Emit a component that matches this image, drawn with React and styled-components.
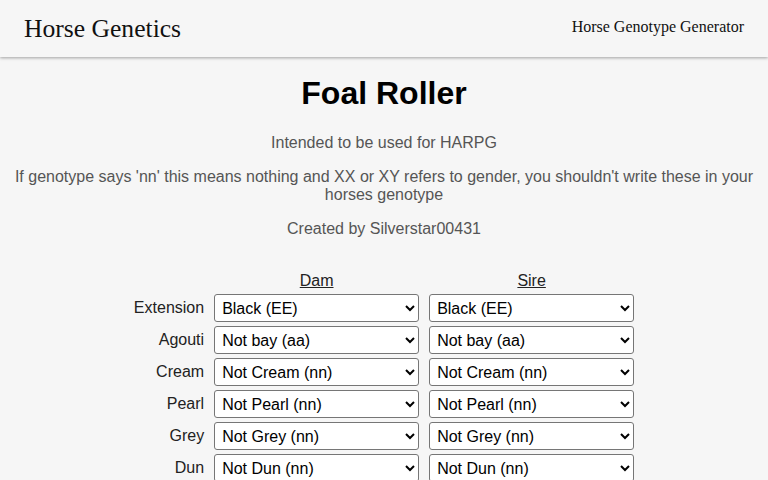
import React from 'react';
import styled, { createGlobalStyle } from 'styled-components';

const GlobalStyle = createGlobalStyle`
  html, body {
    margin: 0;
    padding: 0;
    background: #f6f6f6;
  }
  body {
    font-family: "Liberation Sans", Arial, sans-serif;
  }
`;

const Header = styled.header`
  height: 57px;
  display: flex;
  align-items: center;
  justify-content: space-between;
  padding: 0 24px;
  background: #f6f6f6;
  box-shadow: 0 1px 3px rgba(0, 0, 0, 0.35);
  font-family: "Liberation Serif", "Times New Roman", serif;
  color: #111;
  position: relative;
`;

const Brand = styled.div`
  font-size: 25.6px;
`;

const NavLink = styled.a`
  font-size: 16px;
  color: #111;
  text-decoration: none;
  margin-top: -3px;
`;

const Main = styled.main`
  padding-top: 18px;
  text-align: center;
`;

const Title = styled.h1`
  font-size: 32px;
  font-weight: bold;
  color: #000;
  margin: 0 0 22px;
`;

const Note = styled.p`
  font-size: 16px;
  color: #555;
  margin: 0 0 16px;
  padding: 0 14px;
`;

const Roller = styled.div`
  display: grid;
  grid-template-columns: auto 205px 205px;
  column-gap: 10px;
  row-gap: 4px;
  justify-content: center;
  align-items: center;
  margin-top: 34px;
`;

const ColHead = styled.div`
  font-size: 16px;
  color: #222;
  text-decoration: underline;
  text-align: center;
  line-height: 18px;
`;

const Label = styled.label`
  font-size: 16px;
  color: #222;
  text-align: right;
`;

const Select = styled.select`
  width: 205px;
  height: 28px;
  font-family: "Liberation Sans", Arial, sans-serif;
  font-size: 16px;
  color: #000;
  background: #fff;
  border: 1px solid #767676;
  border-radius: 3px;
  padding: 0 3px;
`;

const genes = [
  { name: 'Extension', value: 'Black (EE)' },
  { name: 'Agouti', value: 'Not bay (aa)' },
  { name: 'Cream', value: 'Not Cream (nn)' },
  { name: 'Pearl', value: 'Not Pearl (nn)' },
  { name: 'Grey', value: 'Not Grey (nn)' },
  { name: 'Dun', value: 'Not Dun (nn)' },
];

export default function App() {
  return (
    <>
      <GlobalStyle />
      <Header>
        <Brand>Horse Genetics</Brand>
        <NavLink href="#">Horse Genotype Generator</NavLink>
      </Header>
      <Main>
        <Title>Foal Roller</Title>
        <Note>Intended to be used for HARPG</Note>
        <Note>
          If genotype says 'nn' this means nothing and XX or XY refers to gender, you shouldn't write these in your horses genotype
        </Note>
        <Note>Created by Silverstar00431</Note>
        <Roller>
          <span />
          <ColHead>Dam</ColHead>
          <ColHead>Sire</ColHead>
          {genes.map(gene => (
            <React.Fragment key={gene.name}>
              <Label>{gene.name}</Label>
              <Select defaultValue={gene.value}>
                <option>{gene.value}</option>
              </Select>
              <Select defaultValue={gene.value}>
                <option>{gene.value}</option>
              </Select>
            </React.Fragment>
          ))}
        </Roller>
      </Main>
    </>
  );
}
